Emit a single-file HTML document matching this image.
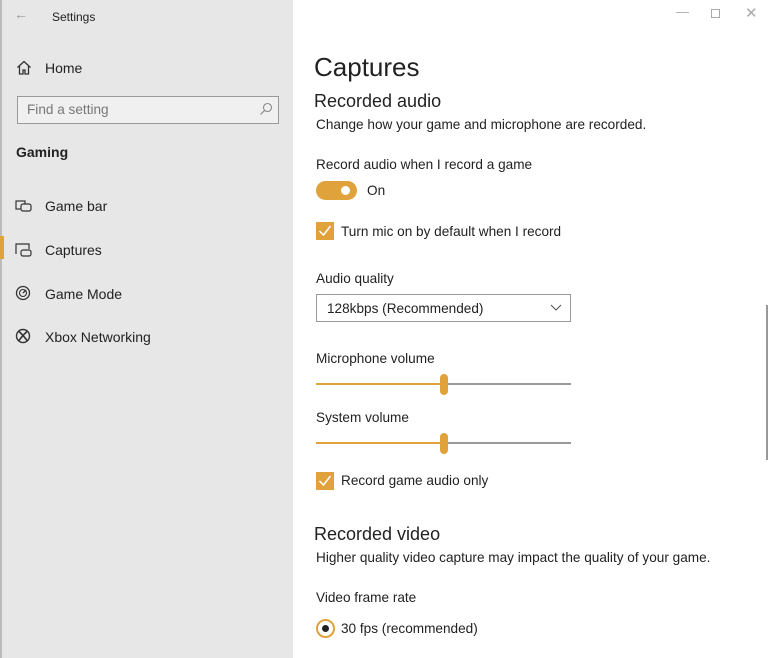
<!DOCTYPE html>
<html><head><meta charset="utf-8"><style>
*{margin:0;padding:0;box-sizing:border-box}
body{width:770px;height:658px;overflow:hidden;font-family:"Liberation Sans",sans-serif;background:#fff;position:relative;color:#222}
.side{position:absolute;left:0;top:0;width:293px;height:658px;background:#e7e7e7;border-left:2px solid #bbb}
.t{position:absolute;white-space:nowrap}
.m{font-size:13.6px}
.s{font-size:14px}
.acc{background:#e0a23b}
.ico{position:absolute}
</style></head><body>
<div class="side"></div>
<div class="t" style="left:14px;top:6px;font-size:14px;color:#999">&#8592;</div>
<div class="t" style="left:52px;top:10px;font-size:12px;color:#222">Settings</div>
<svg class="ico" style="left:16px;top:60px" width="16" height="15" viewBox="0 0 16 15"><path d="M1.5 7.5L8 1.5l6.5 6M3.5 6v8h3.5v-4h2v4h3.5V6" fill="none" stroke="#333" stroke-width="1.3"/></svg>
<div class="t s" style="left:45px;top:60px">Home</div>
<div style="position:absolute;left:17px;top:96px;width:262px;height:28px;border:1.5px solid #999;background:#f0f0f0"></div>
<div class="t" style="left:27px;top:102px;font-size:13.6px;color:#777">Find a setting</div>
<svg class="ico" style="left:259px;top:102px" width="14" height="14"><circle cx="8.5" cy="5.5" r="4" fill="none" stroke="#888" stroke-width="1.1"/><path d="M5.5 8.5L1.5 12.5" stroke="#888" stroke-width="1.2"/></svg>
<div class="t" style="left:16px;top:144px;font-size:14px;font-weight:bold;color:#222">Gaming</div>
<svg class="ico" style="left:15px;top:198px" width="17" height="15"><rect x="1" y="3" width="9" height="8" fill="none" stroke="#333" stroke-width="1.2"/><rect x="6" y="6" width="10" height="7" rx="2" fill="#e7e7e7" stroke="#333" stroke-width="1.2"/></svg>
<div class="t s" style="left:45px;top:198px">Game bar</div>
<div class="acc" style="position:absolute;left:0;top:236px;width:4px;height:23px"></div>
<svg class="ico" style="left:15px;top:242px" width="17" height="15"><path d="M1 12V2h13v5" fill="none" stroke="#333" stroke-width="1.2"/><rect x="6" y="8" width="10" height="6" rx="2" fill="none" stroke="#333" stroke-width="1.2"/></svg>
<div class="t s" style="left:45px;top:242px">Captures</div>
<svg class="ico" style="left:15px;top:285px" width="16" height="16"><circle cx="8" cy="8" r="6.5" fill="none" stroke="#333" stroke-width="1.3"/><circle cx="8" cy="8" r="3.5" fill="none" stroke="#333" stroke-width="1.1"/><path d="M8 8l3-3" stroke="#333" stroke-width="1.3"/></svg>
<div class="t s" style="left:45px;top:286px">Game Mode</div>
<svg class="ico" style="left:15px;top:328px" width="16" height="16"><circle cx="8" cy="8" r="6.5" fill="none" stroke="#333" stroke-width="1.4"/><path d="M4 3.5Q8 7 12 12.5M12 3.5Q8 7 4 12.5" fill="none" stroke="#333" stroke-width="1.6"/></svg>
<div class="t s" style="left:45px;top:329px">Xbox Networking</div>

<div class="t" style="left:676px;top:4px;font-size:13px;color:#aaa">&#8212;</div>
<div style="position:absolute;left:711px;top:9px;width:9px;height:9px;border:1px solid #aaa"></div>
<div class="t" style="left:745px;top:4px;font-size:15px;color:#aaa">&#10005;</div>

<div class="t" style="left:314px;top:52px;font-size:26px;color:#222">Captures</div>
<div class="t" style="left:314px;top:91px;font-size:18px">Recorded audio</div>
<div class="t m" style="left:316px;top:117px">Change how your game and microphone are recorded.</div>
<div class="t m" style="left:316px;top:157px">Record audio when I record a game</div>
<div class="acc" style="position:absolute;left:316px;top:181px;width:41px;height:19px;border-radius:10px"></div>
<div style="position:absolute;left:341px;top:186px;width:9px;height:9px;border-radius:50%;background:#fff"></div>
<div class="t m" style="left:367px;top:183px">On</div>
<div class="acc" style="position:absolute;left:316px;top:222px;width:18px;height:18px"></div>
<svg class="ico" style="left:316px;top:222px" width="18" height="18"><path d="M3.5 9l4 4 7-9" fill="none" stroke="#fff" stroke-width="1.5"/></svg>
<div class="t m" style="left:341px;top:224px">Turn mic on by default when I record</div>
<div class="t m" style="left:316px;top:271px">Audio quality</div>
<div style="position:absolute;left:316px;top:294px;width:255px;height:28px;border:1.5px solid #999"></div>
<div class="t m" style="left:327px;top:301px">128kbps (Recommended)</div>
<svg class="ico" style="left:550px;top:304px" width="12" height="8"><path d="M1 1l5 5 5-5" fill="none" stroke="#555" stroke-width="1.1"/></svg>
<div class="t m" style="left:316px;top:351px">Microphone volume</div>
<div class="acc" style="position:absolute;left:316px;top:383px;width:128px;height:2px"></div>
<div style="position:absolute;left:444px;top:383px;width:127px;height:2px;background:#999"></div>
<div class="acc" style="position:absolute;left:440px;top:374px;width:8px;height:21px;border-radius:4px"></div>
<div class="t m" style="left:316px;top:410px">System volume</div>
<div class="acc" style="position:absolute;left:316px;top:442px;width:128px;height:2px"></div>
<div style="position:absolute;left:444px;top:442px;width:127px;height:2px;background:#999"></div>
<div class="acc" style="position:absolute;left:440px;top:433px;width:8px;height:21px;border-radius:4px"></div>
<div class="acc" style="position:absolute;left:316px;top:472px;width:18px;height:18px"></div>
<svg class="ico" style="left:316px;top:472px" width="18" height="18"><path d="M3.5 9l4 4 7-9" fill="none" stroke="#fff" stroke-width="1.5"/></svg>
<div class="t m" style="left:341px;top:473px">Record game audio only</div>
<div class="t" style="left:314px;top:524px;font-size:18px">Recorded video</div>
<div class="t m" style="left:316px;top:550px">Higher quality video capture may impact the quality of your game.</div>
<div class="t m" style="left:316px;top:590px">Video frame rate</div>
<div style="position:absolute;left:316px;top:619px;width:19px;height:19px;border-radius:50%;border:2px solid #e0a23b;background:#fff"></div>
<div style="position:absolute;left:322px;top:625px;width:7px;height:7px;border-radius:50%;background:#222"></div>
<div class="t m" style="left:341px;top:621px">30 fps (recommended)</div>
<div style="position:absolute;left:766px;top:305px;width:2px;height:155px;background:#999"></div>
</body></html>
